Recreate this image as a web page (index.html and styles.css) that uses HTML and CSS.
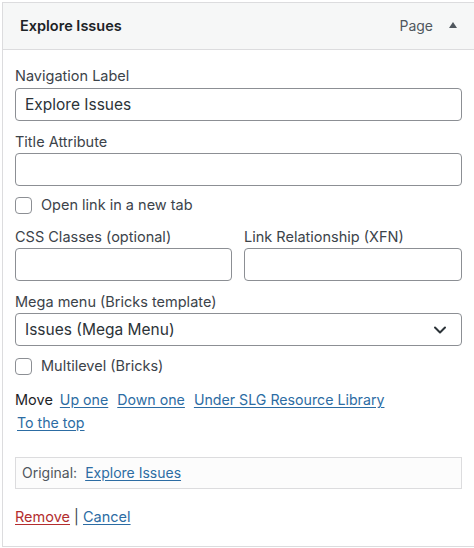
FILE: index.html
```html
<!DOCTYPE html>
<html lang="en">
<head>
<meta charset="utf-8">
<title>Explore Issues</title>
<link rel="stylesheet" href="styles.css">
</head>
<body>
<div class="menu-item">
  <div class="item-bar">
    <span class="item-title">Explore Issues</span>
    <span class="item-controls">
      <span class="item-type">Page</span>
      <svg class="toggle" width="10" height="8" viewBox="0 0 10 8"><path d="M5 1 L9 7 L1 7 Z" fill="#50575e"/></svg>
    </span>
  </div>
  <div class="item-settings">
    <div class="field first">
      <label class="lbl">Navigation Label</label>
      <div class="input">Explore Issues</div>
    </div>
    <div class="field">
      <label class="lbl">Title Attribute</label>
      <div class="input"></div>
    </div>
    <div class="check-row first-check">
      <span class="checkbox"></span>
      <span>Open link in a new tab</span>
    </div>
    <div class="field two-col">
      <div class="col">
        <label class="lbl">CSS Classes (optional)</label>
        <div class="input"></div>
      </div>
      <div class="col">
        <label class="lbl">Link Relationship (XFN)</label>
        <div class="input"></div>
      </div>
    </div>
    <div class="field">
      <label class="lbl">Mega menu (Bricks template)</label>
      <div class="input select">
        <span>Issues (Mega Menu)</span>
        <svg width="14" height="10" viewBox="0 0 14 10"><path d="M2 2.5 L7 7.5 L12 2.5" fill="none" stroke="#2c3338" stroke-width="2" stroke-linecap="round" stroke-linejoin="round"/></svg>
      </div>
    </div>
    <div class="check-row second-check">
      <span class="checkbox"></span>
      <span>Multilevel (Bricks)</span>
    </div>
    <div class="move">
      <div class="move-line">
        <span class="move-label">Move</span>
        <a href="#" class="link">Up one</a>
        <a href="#" class="link">Down one</a>
        <a href="#" class="link">Under SLG Resource Library</a>
      </div>
      <div class="move-line">
        <a href="#" class="link top-link">To the top</a>
      </div>
    </div>
    <div class="original">
      <span>Original:</span>
      <a href="#" class="link">Explore Issues</a>
    </div>
    <div class="actions">
      <a href="#" class="remove">Remove</a> | <a href="#" class="link">Cancel</a>
    </div>
  </div>
</div>
</body>
</html>
```
FILE: styles.css
```css
html, body {
  margin: 0;
  padding: 0;
  background: #ffffff;
}
body {
  font-family: Inter, "Noto Sans", "Liberation Sans", sans-serif;
  font-size: 14.5px;
  line-height: 20px;
  color: #1d2327;
  padding: 2px 0 0 2px;
  overflow: hidden;
}
.menu-item {
  border: 1px solid #dcdcde;
  border-right: none;
}
.item-bar {
  height: 46px;
  background: #f6f7f7;
  border-bottom: 1px solid #dcdcde;
  display: flex;
  align-items: center;
  justify-content: space-between;
  padding: 0 16px 0 17px;
}
.item-title {
  font-weight: 600;
  color: #1d2327;
}
.item-controls {
  display: flex;
  align-items: center;
  gap: 15px;
  color: #50575e;
  font-size: 14px;
}
.toggle {
  display: block;
  margin-top: -2px;
}
.item-settings {
  padding: 0 12px 19px 12px;
}
.field {
  margin-top: 11px;
}
.field.first {
  margin-top: 16px;
}
.lbl {
  display: block;
  color: #3c434a;
  margin-bottom: 1px;
}
.input {
  height: 31px;
  border: 1px solid #8c8f94;
  border-radius: 4px;
  box-sizing: content-box;
  padding: 0 9px;
  display: flex;
  align-items: center;
  color: #2c3338;
  font-size: 15.5px;
}
.field.first .lbl {
  margin-bottom: 2px;
}
.two-col {
  display: grid;
  grid-template-columns: 217px 218px;
  column-gap: 12px;
  margin-top: 12px;
}
.two-col .input {
  padding: 0;
}
.select {
  justify-content: space-between;
  padding: 0 14px 0 9px;
}
.select svg {
  display: block;
}
.check-row {
  display: flex;
  align-items: center;
  gap: 9px;
  color: #3c434a;
}
.first-check {
  margin-top: 9px;
}
.second-check {
  margin-top: 10px;
}
.checkbox {
  width: 15px;
  height: 15px;
  border: 1px solid #8c8f94;
  border-radius: 4px;
  background: #fff;
  flex: none;
}
.move {
  margin-top: 14px;
  color: #1d2327;
}
.move-line {
  height: 23px;
  line-height: 20px;
  display: flex;
  align-items: flex-start;
  gap: 9px;
}
.link {
  color: #2c6ca3;
  text-decoration: underline;
  text-underline-offset: 2px;
}
.move .link {
  font-size: 14.2px;
}
.move-label {
  margin-right: -2px;
}
.top-link {
  margin-left: 2px;
}
.original {
  margin-top: 21px;
  height: 30px;
  border: 1px solid #dcdcde;
  background: #fcfcfc;
  display: flex;
  align-items: center;
  padding: 0 6px;
  gap: 8px;
  color: #50575e;
  font-size: 14px;
}
.actions {
  margin-top: 18px;
  color: #3c434a;
}
.remove {
  color: #b32d2e;
  text-decoration: underline;
  text-underline-offset: 2px;
}
```
